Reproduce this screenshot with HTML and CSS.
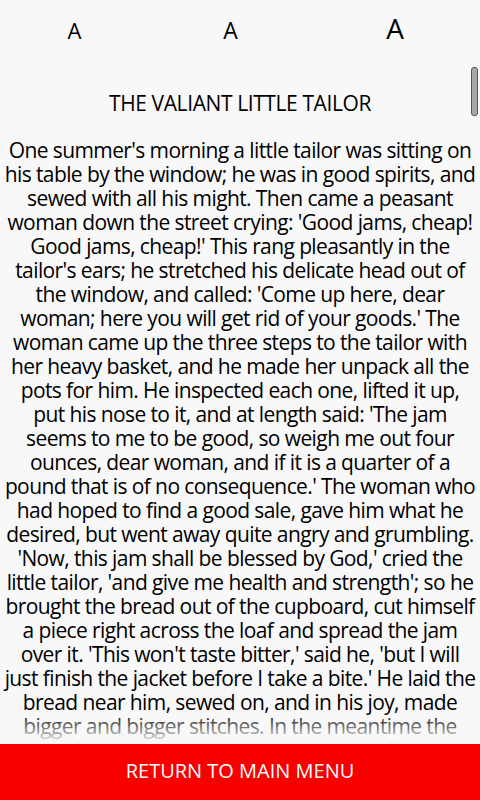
FILE: index.html
```html
<!DOCTYPE html>
<html>
<head>
<meta charset="utf-8">
<link rel="stylesheet" href="styles.css">
</head>
<body>
<div class="app">
  <div class="sizes">
    <div class="size small">A</div>
    <div class="size medium">A</div>
    <div class="size large">A</div>
  </div>
  <div class="scroller">
    <div class="content">
      <h1 class="title">THE VALIANT LITTLE TAILOR</h1>
      <p class="story">One summer's morning a little tailor was sitting on<br>
his table by the window; he was in good spirits, and<br>
sewed with all his might. Then came a peasant<br>
woman down the street crying: 'Good jams, cheap!<br>
Good jams, cheap!' This rang pleasantly in the<br>
tailor's ears; he stretched his delicate head out of<br>
the window, and called: 'Come up here, dear<br>
woman; here you will get rid of your goods.' The<br>
woman came up the three steps to the tailor with<br>
her heavy basket, and he made her unpack all the<br>
pots for him. He inspected each one, lifted it up,<br>
put his nose to it, and at length said: 'The jam<br>
seems to me to be good, so weigh me out four<br>
ounces, dear woman, and if it is a quarter of a<br>
pound that is of no consequence.' The woman who<br>
had hoped to find a good sale, gave him what he<br>
desired, but went away quite angry and grumbling.<br>
'Now, this jam shall be blessed by God,' cried the<br>
little tailor, 'and give me health and strength'; so he<br>
brought the bread out of the cupboard, cut himself<br>
a piece right across the loaf and spread the jam<br>
over it. 'This won't taste bitter,' said he, 'but I will<br>
just finish the jacket before I take a bite.' He laid the<br>
bread near him, sewed on, and in his joy, made<br>
bigger and bigger stitches. In the meantime the<br>
smell of the sweet jam rose to where the flies were<br>
sitting in great numbers, and they were attracted<br>
and descended on it in hosts.</p>
    </div>
    <div class="fade"></div>
    <div class="scrollbar"></div>
  </div>
  <div class="menu-button">RETURN TO MAIN MENU</div>
</div>
</body>
</html>
```
FILE: styles.css
```css
html, body {
  margin: 0;
  padding: 0;
  background: #f8f8f8;
}
.app {
  width: 480px;
  height: 800px;
  display: flex;
  flex-direction: column;
  font-family: "Open Sans", "DejaVu Sans", sans-serif;
  color: #000;
  overflow: hidden;
}
.sizes {
  height: 60px;
  display: grid;
  grid-template-columns: 1fr 1fr 1fr;
  align-items: baseline;
  flex-shrink: 0;
}
.size {
  text-align: center;
  padding-top: 14px;
  line-height: 1;
}
.small { font-size: 22px; padding-right: 11px; }
.medium { font-size: 23px; padding-right: 19px; }
.large { font-size: 28px; padding-right: 10px; }
.scroller {
  flex: 1;
  position: relative;
  overflow: hidden;
}
.content {
  padding: 0 2px;
}
.title {
  margin: 30px 0 0;
  font-size: 21px;
  font-weight: normal;
  text-align: center;
  line-height: 26px;
  letter-spacing: -0.4px;
}
.story {
  margin: 22px 0 0;
  font-size: 21px;
  line-height: 24px;
  letter-spacing: -0.6px;
  text-align: center;
  white-space: nowrap;
}
.fade {
  position: absolute;
  left: 0;
  right: 0;
  bottom: 0;
  height: 32px;
  background: linear-gradient(to bottom, rgba(248,248,248,0), rgba(248,248,248,1));
}
.scrollbar {
  position: absolute;
  right: 2px;
  top: 7px;
  width: 5px;
  height: 47px;
  background: #a8a8a8;
  border: 1px solid #555;
  border-radius: 3px;
}
.menu-button {
  height: 56px;
  box-sizing: border-box;
  padding-bottom: 4px;
  flex-shrink: 0;
  background: #f80000;
  color: #fff;
  font-size: 20px;
  display: flex;
  align-items: center;
  justify-content: center;
}
```
